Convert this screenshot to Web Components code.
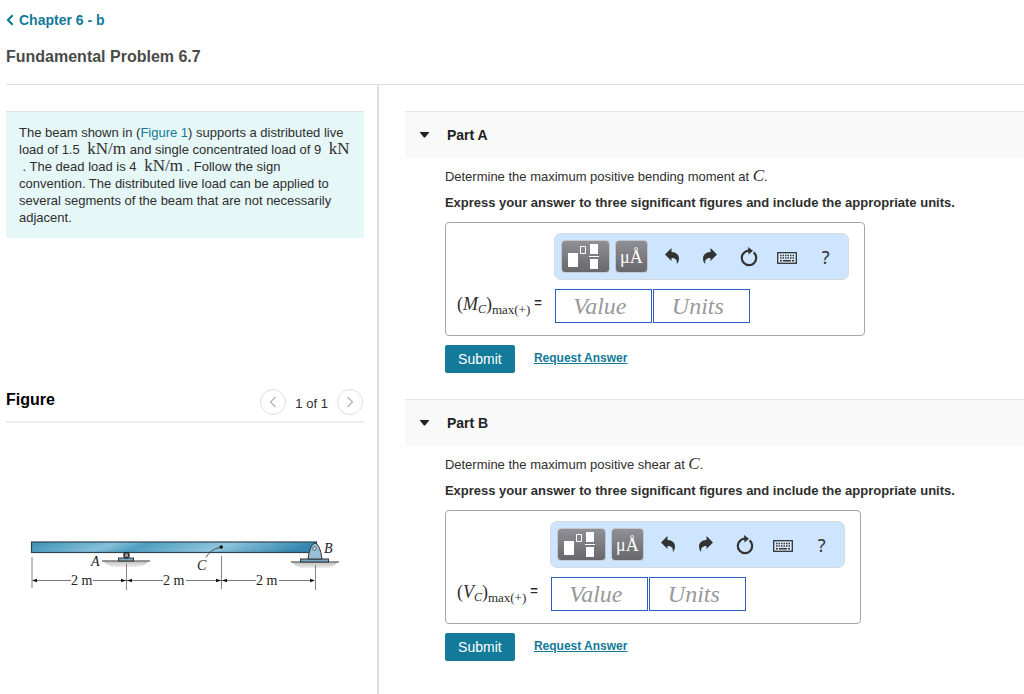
<!DOCTYPE html>
<html lang="en">
<head>
<meta charset="utf-8">
<meta name="viewport" content="width=device-width, initial-scale=1">
<title>Fundamental Problem 6.7</title>
<style>
  body { margin: 0; background: #fff; color: #2e2e2e; font: 13px/17px "Liberation Sans", Arial, sans-serif; }
</style>
</head>
<body>
<problem-page>
  <chapter-header slot="header" chapter="Chapter 6 - b" heading="Fundamental Problem 6.7"></chapter-header>
  <problem-statement slot="aside"></problem-statement>
  <figure-viewer slot="aside"><beam-diagram></beam-diagram></figure-viewer>
  <part-section heading="Part A">
    <span slot="question">Determine the maximum positive bending moment at <math-text italic>C</math-text>.</span>
    <answer-form symbol="M"></answer-form>
  </part-section>
  <part-section heading="Part B">
    <span slot="question">Determine the maximum positive shear at <math-text italic>C</math-text>.</span>
    <answer-form symbol="V"></answer-form>
  </part-section>
</problem-page>

<script>
const define = (name, render) => customElements.define(name, class extends HTMLElement {
  constructor() {
    super();
    this.attachShadow({ mode: "open" });
  }
  connectedCallback() {
    this.shadowRoot.innerHTML = render(this);
  }
});

define("problem-page", () => `
  <style>
    :host { display: flex; flex-direction: column; min-height: 100vh; }
    .columns { flex: 1; display: grid; grid-template-columns: 37% minmax(0, 1fr); }
    aside { border-right: 2px solid #d8dfeb; padding: 26px 13px 0 6px; }
    main { padding: 26px 0 0 26px; }
  </style>
  <slot name="header"></slot>
  <div class="columns">
    <aside><slot name="aside"></slot></aside>
    <main><slot></slot></main>
  </div>`);

define("chapter-header", el => `
  <style>
    :host { display: block; margin-left: 6px; padding-top: 11px; border-bottom: 1px solid #dedede; }
    a { display: inline-flex; align-items: center; gap: 5px; color: #147a99; font-size: 14px; line-height: 18px; font-weight: bold; text-decoration: none; }
    h1 { margin: 17px 0 18px; font-size: 16px; line-height: 19px; color: #4a4a4a; }
  </style>
  <a href="#chapter"><svg width="8" height="12" viewBox="0 0 8 12" aria-hidden="true"><path d="M6.6 1.2 2 6l4.600 4.800" fill="none" stroke="#147a99" stroke-width="2.200"/></svg>${el.getAttribute("chapter")}</a>
  <h1>${el.getAttribute("heading")}</h1>`);

define("math-text", el => `
  <style>
    :host { font-family: "Liberation Serif", "Times New Roman", serif; font-size: 17px; line-height: 16px; font-style: ${el.hasAttribute("italic") ? "italic" : "normal"}; }
  </style><slot></slot>`);

define("problem-statement", () => `
  <style>
    :host { display: block; background: #e6f7f7; border-top: 1px solid #dde6e7; padding: 12px 0 12px 13px; }
    p { margin: 0; white-space: nowrap; }
    a { color: #147a99; text-decoration: none; }
    math-text { margin-left: 4px; }
  </style>
  <p>The beam shown in (<a href="#figure">Figure 1</a>) supports a distributed live<br>
  load of 1.5 <math-text>kN/m</math-text> and single concentrated load of 9 <math-text>kN</math-text><br>
  &nbsp;. The dead load is 4 <math-text>kN/m</math-text> . Follow the sign<br>
  convention. The distributed live load can be applied to<br>
  several segments of the beam that are not necessarily<br>
  adjacent.</p>`);

define("figure-viewer", () => `
  <style>
    :host { display: block; margin-top: 151px; }
    header { display: flex; align-items: center; gap: 9px; padding-bottom: 6px; border-bottom: 2px solid #ececec; }
    h2 { flex: 1; margin: 0 0 4px; color: #000; font-size: 16px; line-height: 20px; }
    button { display: grid; place-items: center; width: 26px; height: 26px; padding: 0; background: #fff; border: 1px solid #dedede; border-radius: 50%; }
    span { padding-top: 3px; }
    .last { margin-right: 1px; }
    .stage { padding-top: 112px; }
  </style>
  <header>
    <h2 id="figure">Figure</h2>
    <button type="button" aria-label="Previous figure"><svg width="8" height="12" viewBox="0 0 8 12"><path d="M6.500 1 1.500 6l5 5" fill="none" stroke="#b5b5b5" stroke-width="1.300"/></svg></button>
    <span>1 of 1</span>
    <button class="last" type="button" aria-label="Next figure"><svg width="8" height="12" viewBox="0 0 8 12"><path d="M1.500 1l5 5-5 5" fill="none" stroke="#b5b5b5" stroke-width="1.300"/></svg></button>
  </header>
  <div class="stage"><slot></slot></div>`);

define("beam-diagram", () => `
  <style>
    :host { display: block; padding-left: 14px; }
    svg { display: block; }
    text { font: 14px "Liberation Serif", "Times New Roman", serif; fill: #222; }
    .i { font-style: italic; }
  </style>
  <svg width="330" height="65" viewBox="20 535 330 65" role="img" aria-label="Beam with supports at A and B">
    <defs>
      <linearGradient id="steel" x2="1" y2="0.100">
        <stop offset="0" stop-color="#3d8fb5"/><stop offset=".15" stop-color="#5fa9c8"/><stop offset=".3" stop-color="#86bfd8"/><stop offset=".42" stop-color="#4f9fc2"/><stop offset=".7" stop-color="#8fc5dc"/><stop offset="1" stop-color="#3387b0"/>
      </linearGradient>
      <linearGradient id="ground" x2="0" y2="1"><stop offset="0" stop-color="#bdbdbd"/><stop offset="1" stop-color="#eee"/></linearGradient>
    </defs>
    <path d="M103 561h46q-5 6-13 6h-20q-8 0-13-6z" fill="url(#ground)"/>
    <path d="M292 562h46q-5 6-12 6h-22q-7 0-12-6z" fill="url(#ground)"/>
    <path d="M102 561h48M291 562h48" stroke="#777" stroke-width="1.400"/>
    <rect x="31.500" y="542" width="285" height="10.500" fill="url(#steel)" stroke="#2f4450" stroke-width="1.200"/>
    <rect x="118.500" y="558" width="15" height="3" fill="#76a8c6" stroke="#333"/>
    <circle cx="126.500" cy="555.300" r="2.600" fill="#999" stroke="#222" stroke-width="1.300"/>
    <rect x="300.500" y="559" width="28" height="3" fill="#76a8c6" stroke="#333"/>
    <path d="M308 559q2-15 7-16 5 1 7 16z" fill="#98c1d9" stroke="#333"/>
    <circle cx="314.500" cy="548.500" r="1.700" fill="#eee" stroke="#333" stroke-width=".8"/>
    <circle cx="221.200" cy="547" r="1.800" fill="#111"/>
    <path d="M220 547.500q-9 1-14 10" fill="none" stroke="#333" stroke-width=".8"/>
    <path d="M32 557v31M126.500 564v26M221.500 556v33M315.500 565v25" stroke="#777" stroke-width=".9" fill="none"/>
    <path d="M34 580.500h37M93 580.500h70M186 580.500h70M279 580.500h35" stroke="#555" stroke-width=".8"/>
    <path d="M32 580.500l5-1.700v3.400zM126 580.500l-5-1.700v3.400zM127 580.500l5-1.700v3.400zM221 580.500l-5-1.700v3.400zM222 580.500l5-1.700v3.400zM315 580.500l-5-1.700v3.400z" fill="#111"/>
    <text x="91" y="566" class="i">A</text>
    <text x="197" y="570" class="i">C</text>
    <text x="324" y="553" class="i">B</text>
    <text x="71" y="585">2 m</text><text x="163" y="585">2 m</text><text x="256" y="585">2 m</text>
  </svg>`);

define("part-section", el => `
  <style>
    :host { display: block; margin-bottom: 26px; }
    h2 { margin: 0; background: #f9f9f9; border-top: 1px solid #e6e6e6; }
    h2 button { display: flex; align-items: center; gap: 17px; width: 100%; height: 46px; padding: 0 14px; border: 0; background: none; color: #222; font: bold 14px/18px "Liberation Sans", Arial, sans-serif; }
    .body { padding-left: 40px; }
    p { margin: 10px 0 0; line-height: 18px; }
    .instructions { margin: 8px 0 10px; font-weight: bold; }
  </style>
  <h2><button type="button" aria-expanded="true"><svg width="11" height="6" viewBox="0 0 11 6" aria-hidden="true"><path d="M.5 0h10l-4 5q-1 1-2 0z" fill="#222"/></svg>${el.getAttribute("heading")}</button></h2>
  <div class="body">
    <p><slot name="question"></slot></p>
    <p class="instructions">Express your answer to three significant figures and include the appropriate units.</p>
    <slot></slot>
  </div>`);

define("math-toolbar", () => `
  <style>
    :host { display: flex; align-items: center; box-sizing: border-box; width: 295px; height: 47px; padding: 0 3px 0 6px; background: #cee5ff; border: 1px solid #d5dade; border-radius: 7px; }
    button { flex: 1; display: grid; place-items: center; height: 33px; padding: 0; border: 0; background: none; color: #333; font: 18px/22px "Noto Sans", sans-serif; }
    .key { flex: none; width: 33px; margin-right: 5px; border: 1px solid #c3c7cc; border-radius: 4px; background: linear-gradient(#8f8f96, #68686b); color: #fff; font: 18px/22px "Liberation Serif", "Times New Roman", serif; }
    .wide { width: 49px; }
  </style>
  <button type="button" class="key wide" aria-label="Templates"><svg width="47" height="31" viewBox="0 0 47 31"><path d="M6 12h10v14H6zM28 3h8v10h-8zM28 18h8v10h-8zM27 15h10v1H27z" fill="#fff"/><path d="M18.500 5.500h5v7h-5z" fill="none" stroke="#fff"/></svg></button>
  <button type="button" class="key" aria-label="Symbols">μÅ</button>
  <button type="button" aria-label="Undo"><svg width="16" height="17" viewBox="0 0 16 17"><path d="M1 6.500 7.500 0v4C12.500 4.200 15 7 15 10.500c0 2.500-.9 4.500-2.300 5.500.8-3.500-.7-6-5.200-6v3z" fill="#333"/></svg></button>
  <button type="button" aria-label="Redo"><svg width="16" height="17" viewBox="0 0 16 17"><path d="M15 6.500 8.500 0v4C3.500 4.200 1 7 1 10.500c0 2.500.9 4.500 2.300 5.500-.8-3.500.7-6 5.200-6v3z" fill="#333"/></svg></button>
  <button type="button" aria-label="Reset"><svg width="18" height="20" viewBox="0 0 18 20"><path d="M13.600 5.400A7.200 7.200 0 1 1 4.500 5.300Q6.500 3.700 9 3.700" fill="none" stroke="#333" stroke-width="2.200"/><path d="M8 0 13 3.700 8.500 7.500z" fill="#333"/></svg></button>
  <button type="button" aria-label="Keyboard"><svg width="20" height="16" viewBox="0 0 20 16"><rect x=".7" y="3.700" width="18.600" height="10.600" fill="#dcecff" stroke="#333" stroke-width="1.300"/><path d="M3 6.500h14M3 9h14" stroke="#333" stroke-width="1.400" stroke-dasharray="1.500 1"/><path d="M3 11.800h2M6 11.800h8M15 11.800h2" stroke="#333" stroke-width="1.400"/></svg></button>
  <button type="button" aria-label="Help">?</button>`);

define("answer-form", el => `
  <style>
    :host { display: block; }
    .box { display: grid; grid-template-columns: auto auto; width: fit-content; box-sizing: border-box; column-gap: 12px; row-gap: 9px; padding: 10px 15px 12px 11px; border: 1px solid #a6a6a6; border-radius: 4px; }
    math-toolbar { grid-column: 2; }
    label { font: 18px/20px "Liberation Serif", "Times New Roman", serif; white-space: nowrap; padding-top: 5px; }
    i i { font-size: 12px; position: relative; top: 3px; }
    .sub { font-size: 13px; position: relative; top: 4px; }
    .eq { margin-left: 4px; font: bold 13px/12px "Liberation Sans", Arial, sans-serif; vertical-align: 3px; }
    .fields { display: flex; gap: 1px; padding-left: 1px; }
    input { box-sizing: border-box; width: 97px; height: 34px; margin: 0; padding: 0 7px 0 0; border: 1px solid #2b5fc4; border-radius: 0; background: #fff; text-align: center; font: italic 24px/30px "Liberation Serif", "Times New Roman", serif; }
    input::placeholder { color: #999; opacity: 1; }
    .actions { display: flex; align-items: center; gap: 19px; margin-top: 9px; }
    .submit { width: 70px; height: 28px; padding: 0; border: 0; border-radius: 2px; background: #147a99; color: #fff; font: 14px/18px "Liberation Sans", Arial, sans-serif; }
    a { color: #147a99; font-size: 12px; line-height: 16px; font-weight: bold; padding-bottom: 2px; }
  </style>
  <div class="box">
    <math-toolbar></math-toolbar>
    <label for="value">(<i>${el.getAttribute("symbol")}<i>C</i></i>)<span class="sub">max(+)</span><span class="eq">=</span></label>
    <div class="fields">
      <input id="value" type="text" placeholder="Value">
      <input type="text" placeholder="Units" aria-label="Units">
    </div>
  </div>
  <div class="actions">
    <button class="submit" type="button">Submit</button>
    <a href="#request">Request Answer</a>
  </div>`);
</script>
</body>
</html>
